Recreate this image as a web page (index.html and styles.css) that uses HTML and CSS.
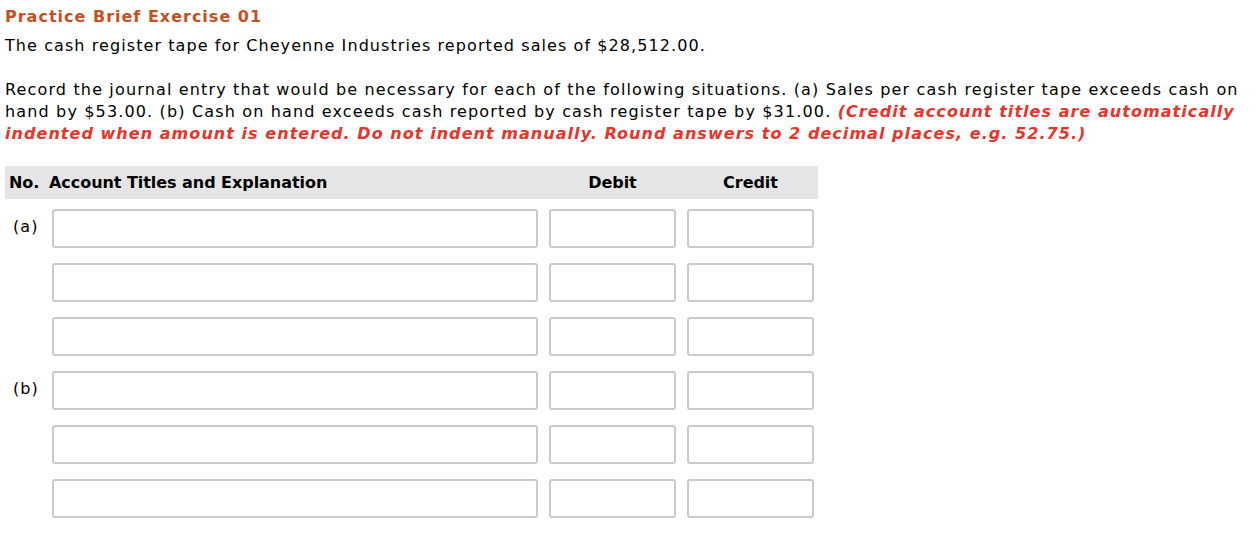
FILE: index.html
```html
<!DOCTYPE html>
<html>
<head>
<meta charset="utf-8">
<link rel="stylesheet" href="styles.css">
</head>
<body>
<div class="page">
  <h1 class="title">Practice Brief Exercise 01</h1>
  <p class="text intro">The cash register tape for Cheyenne Industries reported sales of $28,512.00.</p>
  <p class="text instr">Record the journal entry that would be necessary for each of the following situations. (a) Sales per cash register tape exceeds cash on hand by $53.00. (b) Cash on hand exceeds cash reported by cash register tape by $31.00. <em class="note">(Credit account titles are automatically indented when amount is entered. Do not indent manually. Round answers to 2 decimal places, e.g. 52.75.)</em></p>

  <div class="journal">
    <div class="head">
      <span class="h-no">No.</span>
      <span class="h-acct">Account Titles and Explanation</span>
      <span class="h-amt">Debit</span>
      <span class="h-amt">Credit</span>
    </div>
    <div class="rows">
      <div class="row"><span class="lbl">(a)</span><span class="box"></span><span class="box"></span><span class="box"></span></div>
      <div class="row"><span class="lbl"></span><span class="box"></span><span class="box"></span><span class="box"></span></div>
      <div class="row"><span class="lbl"></span><span class="box"></span><span class="box"></span><span class="box"></span></div>
      <div class="row"><span class="lbl">(b)</span><span class="box"></span><span class="box"></span><span class="box"></span></div>
      <div class="row"><span class="lbl"></span><span class="box"></span><span class="box"></span><span class="box"></span></div>
      <div class="row"><span class="lbl"></span><span class="box"></span><span class="box"></span><span class="box"></span></div>
    </div>
  </div>
</div>
</body>
</html>
```

FILE: styles.css
```css
html, body {
  margin: 0;
  padding: 0;
  background: #fff;
}
.page {
  padding: 6px 0 0 5px;
  font-family: "DejaVu Sans", Verdana, sans-serif;
  color: #000;
  font-size: 16px;
  line-height: 22px;
  letter-spacing: 1.15px;
}
.title {
  margin: 0;
  font-size: 16px;
  font-weight: bold;
  color: #c5501f;
  line-height: 22px;
  letter-spacing: 1px;
}
.text {
  margin: 7px 0 0 0;
}
.intro {
  letter-spacing: 1.08px;
}
.instr {
  margin-top: 22px;
}
.note {
  font-weight: bold;
  font-style: italic;
  color: #e8342a;
  letter-spacing: 1.05px;
}
.journal {
  width: 813px;
  margin-top: 21px;
  letter-spacing: 0;
}
.head {
  display: grid;
  grid-template-columns: 44px 500px 127px 11px 127px 4px;
  align-items: center;
  height: 33px;
  background: #e5e5e5;
  font-family: "DejaVu Sans", sans-serif;
  font-weight: bold;
  font-size: 16px;
  letter-spacing: -0.05px;
}
.h-no { padding-left: 4px; }
.h-amt { text-align: center; }
.head .h-amt:last-child { grid-column: 5; }
.rows {
  display: flex;
  flex-direction: column;
  gap: 15px;
  padding-top: 10px;
}
.row {
  display: grid;
  grid-template-columns: 36px 486px 127px 127px;
  column-gap: 11px;
  align-items: center;
}
.lbl {
  padding-left: 8px;
  padding-bottom: 3px;
  font-size: 16px;
  letter-spacing: 1.1px;
}
.box {
  height: 35px;
  border: 2px solid #cacaca;
  border-radius: 3px;
  background: #fff;
}
```
